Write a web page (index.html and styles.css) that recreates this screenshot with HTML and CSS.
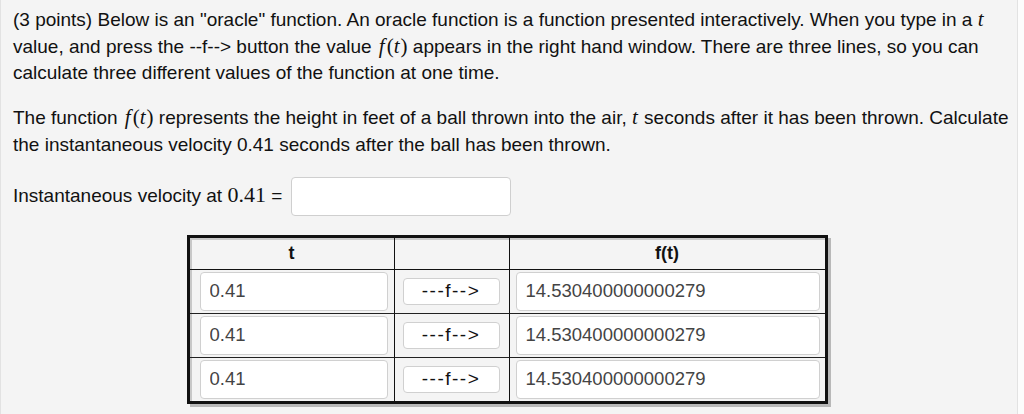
FILE: index.html
```html
<!DOCTYPE html>
<html>
<head>
<meta charset="utf-8">
<link rel="stylesheet" href="styles.css">
</head>
<body>
<div class="panel">
  <p class="para">(3 points) Below is an "oracle" function. An oracle function is a function presented interactively. When you type in a <span class="mi">t</span> value, and press the --f--&gt; button the value <span class="mi fn">f</span><span class="mo">(</span><span class="mi">t</span><span class="mo">)</span> appears in the right hand window. There are three lines, so you can calculate three different values of the function at one time.</p>
  <p class="para">The function <span class="mi fn">f</span><span class="mo">(</span><span class="mi">t</span><span class="mo">)</span> represents the height in feet of a ball thrown into the air, <span class="mi">t</span> seconds after it has been thrown. Calculate the instantaneous velocity 0.41 seconds after the ball has been thrown.</p>
  <div class="answer">
    <span class="label">Instantaneous velocity at <span class="mn">0.41</span> =</span>
    <input class="answer-input" type="text">
  </div>
  <table class="oracle">
    <colgroup>
      <col class="c1"><col class="c2"><col class="c3">
    </colgroup>
    <thead>
      <tr><th class="col1">t</th><th class="col2"></th><th class="col3">f(t)</th></tr>
    </thead>
    <tbody>
      <tr>
        <td class="col1"><input class="tin" type="text" value="0.41"></td>
        <td class="col2"><button class="fbtn">---f--&gt;</button></td>
        <td class="col3"><input class="fin" type="text" value="14.530400000000279"></td>
      </tr>
      <tr>
        <td class="col1"><input class="tin" type="text" value="0.41"></td>
        <td class="col2"><button class="fbtn">---f--&gt;</button></td>
        <td class="col3"><input class="fin" type="text" value="14.530400000000279"></td>
      </tr>
      <tr class="last">
        <td class="col1"><input class="tin" type="text" value="0.41"></td>
        <td class="col2"><button class="fbtn">---f--&gt;</button></td>
        <td class="col3"><input class="fin" type="text" value="14.530400000000279"></td>
      </tr>
    </tbody>
  </table>
</div>
</body>
</html>
```
FILE: styles.css
```css
html, body {
  margin: 0;
  padding: 0;
  background: #fcfcfc;
}
body {
  font-family: "Liberation Sans", Arial, Helvetica, sans-serif;
  font-size: 19px;
  color: #111;
}
.panel {
  box-sizing: border-box;
  width: 1018px;
  height: 414px;
  background: #f4f4f4;
  border-left: 1px solid #e2e2e2;
  border-right: 1px solid #e2e2e2;
  padding: 7px 16px 0 12px;
}
.para {
  margin: 0 -10px 18.5px 0;
  line-height: 26.5px;
}
.mi {
  font-family: "Liberation Serif", "Times New Roman", serif;
  font-style: italic;
  font-size: 21px;
  line-height: 1;
  padding-right: 1px;
}
.fn {
  padding-left: 2px;
  padding-right: 2px;
}
.mo {
  font-family: "Liberation Serif", "Times New Roman", serif;
  font-size: 21px;
  line-height: 1;
}
.mn {
  font-family: "Liberation Serif", "Times New Roman", serif;
  font-size: 22px;
  line-height: 1;
}
.answer {
  display: flex;
  align-items: center;
  height: 39px;
}
.label {
  margin-right: 9px;
  line-height: 26px;
}
.answer-input {
  box-sizing: border-box;
  width: 220px;
  height: 39px;
  background: #fff;
  border: 1px solid #cfcfcf;
  border-radius: 4px;
  margin: 0;
}
.oracle {
  margin: 19px auto 0;
  border-collapse: separate;
  border-spacing: 0;
  border: 3px solid #111;
  box-shadow: 3px 3px 0 #b8b8b8, inset 2px 2px 0 #c8c8c8;
  table-layout: fixed;
  width: 641px;
}
.c1 { width: 205px; }
.c2 { width: 115px; }
.c3 { width: 315px; }
.oracle th {
  height: 31px;
  padding: 0;
  font-weight: bold;
  font-size: 18px;
  text-align: center;
  border-bottom: 1px solid #111;
  color: #111;
}
.oracle td {
  height: 43px;
  padding: 0;
  border-bottom: 1px solid #222;
  vertical-align: middle;
}
.oracle tr.last td {
  border-bottom: none;
}
.oracle .col1, .oracle .col2 {
  border-right: 1px solid #111;
}
.oracle td.col1 { padding-left: 10px; }
.oracle td.col2 { padding-left: 8px; }
.oracle td.col3 { padding-left: 6px; }
.tin, .fin {
  box-sizing: border-box;
  display: block;
  height: 39px;
  margin: 0;
  background: #fff;
  border: 1px solid #d0d0d0;
  border-radius: 4px;
  padding: 0 0 0 9px;
  font-family: "Liberation Sans", Arial, Helvetica, sans-serif;
  font-size: 18.5px;
  color: #444;
}
.tin { width: 188px; }
.fin { width: 304px; }
.fbtn {
  box-sizing: border-box;
  display: block;
  width: 97px;
  height: 27px;
  margin: 0;
  background: #fff;
  border: 1px solid #d0d0d0;
  border-radius: 4px;
  padding: 0;
  font-family: "Liberation Sans", Arial, Helvetica, sans-serif;
  font-size: 19px;
  letter-spacing: 1.5px;
  color: #111;
}
```
